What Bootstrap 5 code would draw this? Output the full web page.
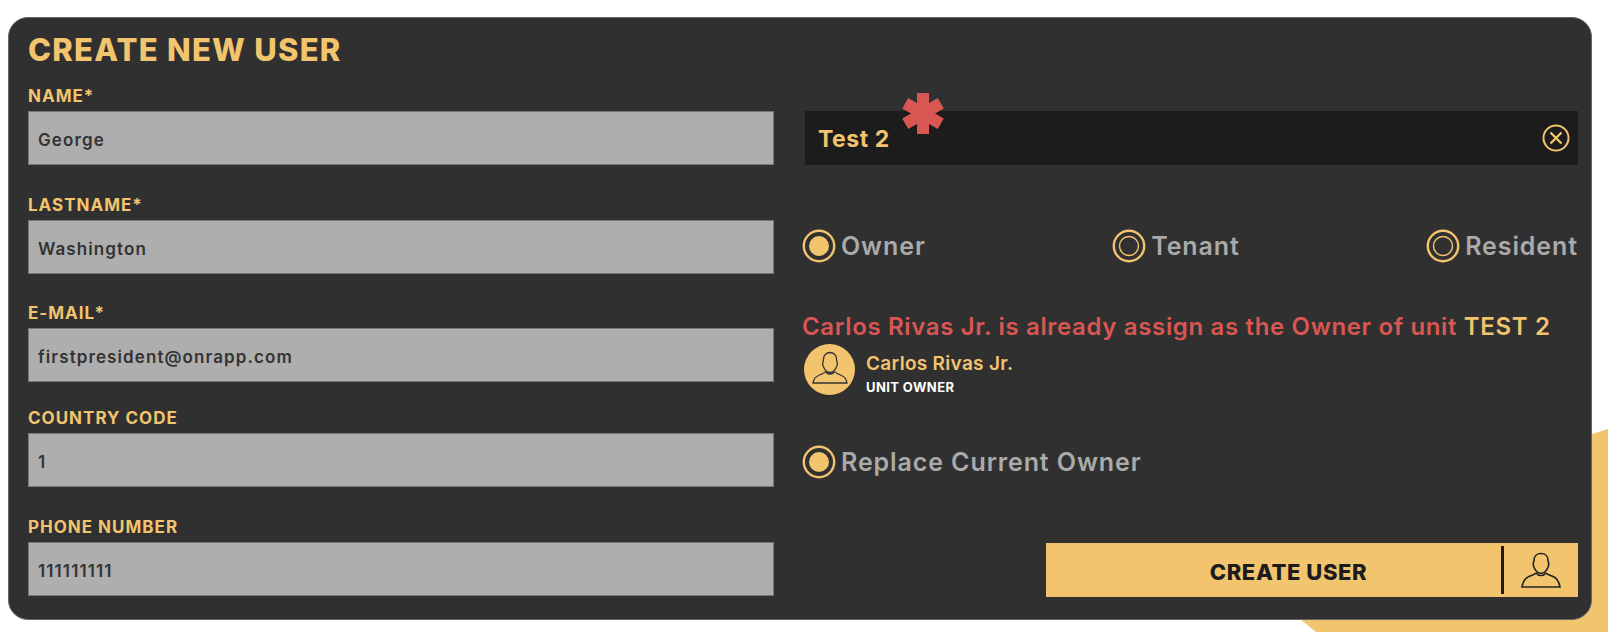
<!DOCTYPE html>
<html lang="en">
<head>
<meta charset="utf-8">
<title>Create new user</title>
<link href="https://cdn.jsdelivr.net/npm/bootstrap@5.3.0/dist/css/bootstrap.min.css" rel="stylesheet">
<style>
html,body{height:632px;overflow:hidden;background:#fff}
body{font-family:Inter,"Liberation Sans",sans-serif;position:relative;padding:17px 16px 0 8px}
.decor{position:absolute;left:0;top:0;width:1608px;height:632px;z-index:0}
.panel{position:relative;z-index:1;height:603px;background:#303030;border:1px solid #666;border-radius:20px;padding:0 13px 0 19px}
.ttl{font-size:31px;font-weight:800;color:#f2c46d;letter-spacing:1.25px;line-height:36px;margin:14px 0 18px;text-transform:uppercase}
.left-col{width:746px}
.right-col{width:773px}
.fld-label{display:block;color:#f2c46d;font-size:17px;font-weight:700;letter-spacing:1px;line-height:20px;margin:0 0 5px;text-transform:uppercase}
.fld-input.form-control{height:54px;background:#aeaeae;border:1px solid #777;border-radius:0;color:#333;font-size:17px;font-weight:600;letter-spacing:1.1px;padding:4px 9px 0}
.gap-a{margin-bottom:30px}
.gap-b{margin-bottom:29px}
.gap-c{margin-bottom:26px}
.chip{position:relative;height:54px;margin-top:25px;background:#1c1c1c;padding:0 8px 0 13px;color:#f2c46d;font-size:23px;font-weight:700;letter-spacing:.55px}
.chip-text{padding-top:2px}
.star{position:absolute;left:95px;top:-19px}
.opt{color:#aaa;font-size:25px;font-weight:600;letter-spacing:.9px;line-height:34px;gap:5px}
.opts{margin-top:64px}
.warn{color:#d95752;font-size:24px;font-weight:600;letter-spacing:.65px;line-height:30px;margin:49px 0 0 -3px;white-space:nowrap}
.warn span{color:#f2c46d}
.owner-row{margin:2px 0 0 -1px;gap:11px}
.avatar{width:51px;height:51px;border-radius:50%;background:#f2c46d}
.owner-text{padding-top:8px}
.who{color:#f2c46d;font-size:19px;font-weight:600;letter-spacing:.3px;line-height:24px}
.role{color:#fff;font-size:13px;font-weight:700;letter-spacing:.4px;line-height:16px;margin-top:3px}
.replace{margin-top:50px}
.cta.btn{height:54px;width:532px;background:#f2c46d;border:0;border-radius:0;color:#1c1c1c;font-size:22px;font-weight:800;letter-spacing:.6px;padding:0;margin-top:64px}
.cta-text{flex:1 1 auto;text-align:center;padding-top:4px;padding-left:30px}
.cta-div{width:3px;height:48px;background:#1c1c1c}
.cta-ico{width:74px}
.rad{flex:0 0 auto;margin-left:-3px}
</style>
</head>
<body>
<svg class="decor" viewBox="0 0 1608 632"><polygon points="1300,619 1316,632 1608,632 1608,429 1592,434 1500,500" fill="#f2c46d"/></svg>
<main class="panel">
<h1 class="ttl">Create new user</h1>
<div class="d-flex justify-content-between">
<form class="left-col">
<label class="fld-label">Name*</label>
<input class="form-control fld-input gap-a" value="George">
<label class="fld-label">Lastname*</label>
<input class="form-control fld-input gap-b" value="Washington">
<label class="fld-label">E-mail*</label>
<input class="form-control fld-input gap-c" value="firstpresident@onrapp.com">
<label class="fld-label">Country code</label>
<input class="form-control fld-input gap-a" value="1">
<label class="fld-label">Phone number</label>
<input class="form-control fld-input" value="111111111">
</form>
<section class="right-col">
<div class="chip d-flex align-items-center justify-content-between">
<span class="chip-text">Test 2</span>
<svg class="star" width="46" height="44" viewBox="0 0 46 44" aria-hidden="true"><g fill="#d95752"><rect x="17" y="1" width="12" height="41"/><rect x="17" y="1" width="12" height="41" transform="rotate(60 23 21.5)"/><rect x="17" y="1" width="12" height="41" transform="rotate(120 23 21.5)"/></g></svg>
<svg width="28" height="28" viewBox="0 0 28 28" aria-hidden="true"><circle cx="14" cy="14" r="12.500" fill="none" stroke="#f2c46d" stroke-width="2"/><path d="M8.500 8.500l11 11M19.500 8.500l-11 11" stroke="#f2c46d" stroke-width="2.400" fill="none"/></svg>
</div>
<div class="opts d-flex justify-content-between">
<div class="opt d-flex align-items-center"><svg class="rad" width="34" height="34" viewBox="0 0 34 34" aria-hidden="true"><circle cx="17" cy="17" r="15.200" fill="none" stroke="#f2c46d" stroke-width="2.400"/><circle cx="17" cy="17" r="10" fill="#f2c46d"/></svg>Owner</div>
<div class="opt d-flex align-items-center"><svg class="rad" width="34" height="34" viewBox="0 0 34 34" aria-hidden="true"><circle cx="17" cy="17" r="15.200" fill="none" stroke="#f2c46d" stroke-width="2.400"/><circle cx="17" cy="17" r="9.500" fill="none" stroke="#f2c46d" stroke-width="1.400"/></svg>Tenant</div>
<div class="opt d-flex align-items-center"><svg class="rad" width="34" height="34" viewBox="0 0 34 34" aria-hidden="true"><circle cx="17" cy="17" r="15.200" fill="none" stroke="#f2c46d" stroke-width="2.400"/><circle cx="17" cy="17" r="9.500" fill="none" stroke="#f2c46d" stroke-width="1.400"/></svg>Resident</div>
</div>
<p class="warn">Carlos Rivas Jr. is already assign as the Owner of unit <span>TEST 2</span></p>
<div class="owner-row d-flex align-items-center">
<div class="avatar d-flex align-items-center justify-content-center flex-shrink-0">
<svg width="40" height="40" viewBox="0 0 40 40" aria-hidden="true"><path d="M13.500 9c0-4 3-6.500 6.500-6.500S26.500 5 26.500 9c0 1 .2 2 .7 3.500.5 1.800-.2 3.500-1 5-1.500 3-3.500 5-6.200 5s-4.700-2-6.200-5c-.8-1.500-1.500-3.200-1-5 .5-1.500.7-2.500.7-3.500zM15.500 21.500c-1 1.500-3.500 2.500-6 3.500-3.500 1.300-6 4-6.500 8h34c-.5-4-3-6.700-6.500-8-2.500-1-5-2-6-3.500M15.500 21.500c1 1.800 2.500 2.500 4.500 2.500s3.500-.7 4.500-2.500" fill="none" stroke="#333" stroke-width="1.300"/></svg>
</div>
<div class="owner-text"><div class="who">Carlos Rivas Jr.</div><div class="role">UNIT OWNER</div></div>
</div>
<div class="opt replace d-flex align-items-center"><svg class="rad" width="34" height="34" viewBox="0 0 34 34" aria-hidden="true"><circle cx="17" cy="17" r="15.200" fill="none" stroke="#f2c46d" stroke-width="2.400"/><circle cx="17" cy="17" r="10" fill="#f2c46d"/></svg>Replace Current Owner</div>
<div class="d-flex justify-content-end">
<button type="button" class="btn cta d-flex align-items-center">
<span class="cta-text">CREATE USER</span>
<span class="cta-div"></span>
<span class="cta-ico d-flex justify-content-center"><svg width="40" height="36" viewBox="0 0 40 36" aria-hidden="true"><path d="M13 8c0-4 3-6.500 7-6.500s7 2.500 7 6.500c0 1.500.5 2.500.7 3.500.4 1.800-.4 3.300-1.200 4.800-1.500 3-3.500 5-6.500 5s-5-2-6.500-5c-.8-1.500-1.600-3-1.200-4.800.2-1 .7-2 .7-3.500zM15 21c-1 1.300-3 2-6 3-4 1.300-7 5-8 11h38c-1-6-4-9.700-8-11-3-1-5-1.700-6-3M15 21c1.300 1.800 3 2.500 5 2.500s3.700-.7 5-2.500" fill="none" stroke="#222" stroke-width="1.600"/></svg></span>
</button>
</div>
</section>
</div>
</main>
<script src="https://cdn.jsdelivr.net/npm/bootstrap@5.3.0/dist/js/bootstrap.bundle.min.js"></script>
</body>
</html>
